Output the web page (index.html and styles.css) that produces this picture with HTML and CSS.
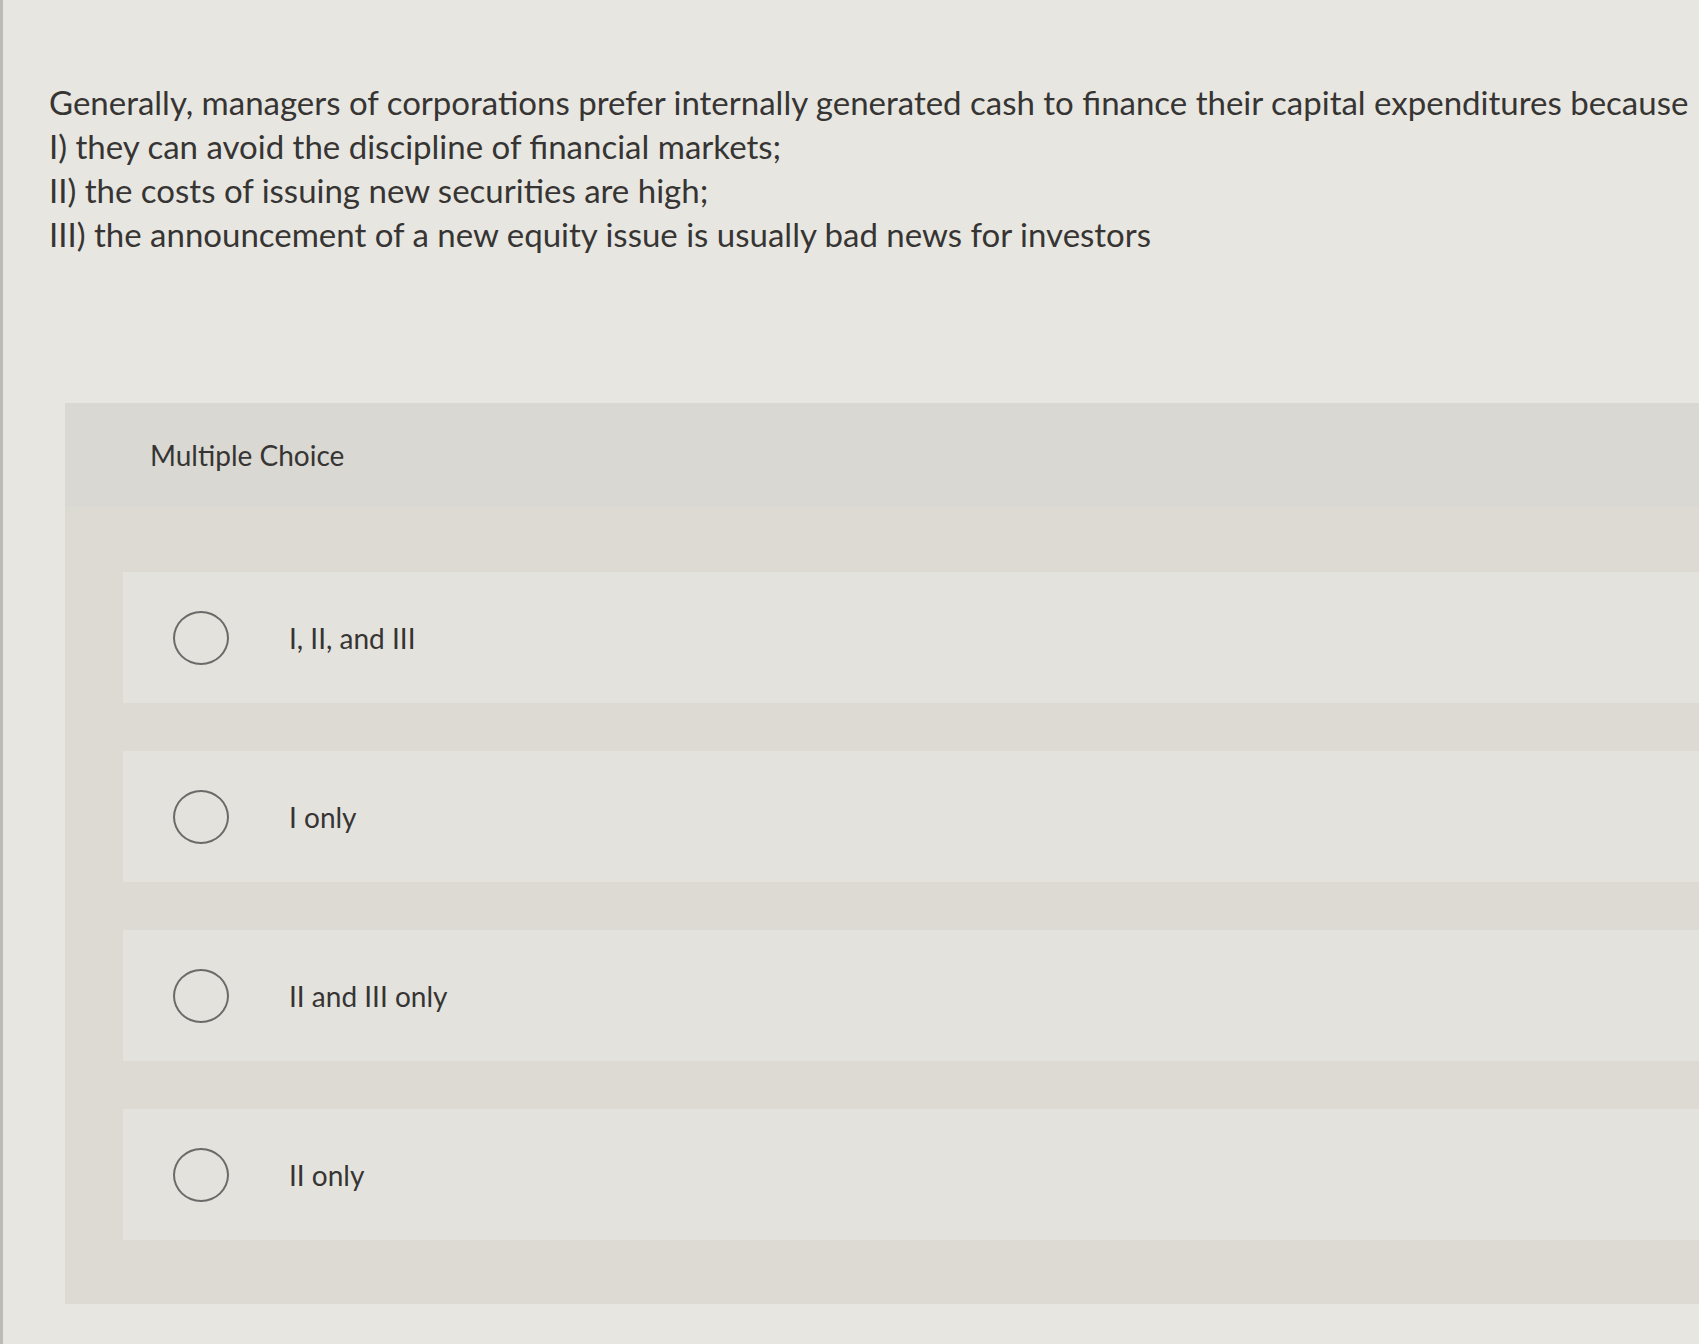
FILE: index.html
```html
<!DOCTYPE html>
<html lang="en">
<head>
<meta charset="utf-8">
<title>Multiple Choice</title>
<link rel="stylesheet" href="styles.css">
</head>
<body>
<div class="page">
  <div class="question">
    <div class="qline">Generally, managers of corporations prefer internally generated cash to finance their capital expenditures because</div>
    <div class="qline">I) they can avoid the discipline of financial markets;</div>
    <div class="qline">II) the costs of issuing new securities are high;</div>
    <div class="qline">III) the announcement of a new equity issue is usually bad news for investors</div>
  </div>
  <div class="panel">
    <div class="panel-head">Multiple Choice</div>
    <div class="panel-body">
      <div class="option"><span class="radio"></span><span class="label">I, II, and III</span></div>
      <div class="option"><span class="radio"></span><span class="label">I only</span></div>
      <div class="option"><span class="radio"></span><span class="label">II and III only</span></div>
      <div class="option"><span class="radio"></span><span class="label">II only</span></div>
    </div>
  </div>
</div>
</body>
</html>
```

FILE: styles.css
```css
html, body {
  margin: 0;
  padding: 0;
  background: #e8e6e0;
  overflow: hidden;
}
body {
  font-family: Lato, "Open Sans", "Liberation Sans", sans-serif;
  color: #363534;
  border-left: 3px solid #bdbbb6;
  min-height: 1344px;
  box-sizing: border-box;
}
.page {
  padding-top: 80px;
}
.question {
  padding-left: 46px;
  font-size: 33px;
  line-height: 44px;
  white-space: nowrap;
}
.panel {
  margin-top: 147px;
  margin-left: 62px;
  background: #dcdad3;
}
.panel-head {
  height: 104px;
  background: #d9d8d2;
  display: flex;
  align-items: center;
  padding-left: 85px;
  font-size: 28px;
  box-sizing: border-box;
}
.panel-body {
  padding: 65px 0 64px 58px;
  display: flex;
  flex-direction: column;
  gap: 48px;
}
.option {
  height: 131px;
  background: #e4e2dc;
  display: flex;
  align-items: center;
  padding-left: 50px;
  font-size: 28px;
}
.radio {
  width: 56px;
  height: 54px;
  border: 2px solid #6b6a68;
  border-radius: 50%;
  box-sizing: border-box;
  flex: none;
}
.label {
  margin-left: 60px;
}
```
